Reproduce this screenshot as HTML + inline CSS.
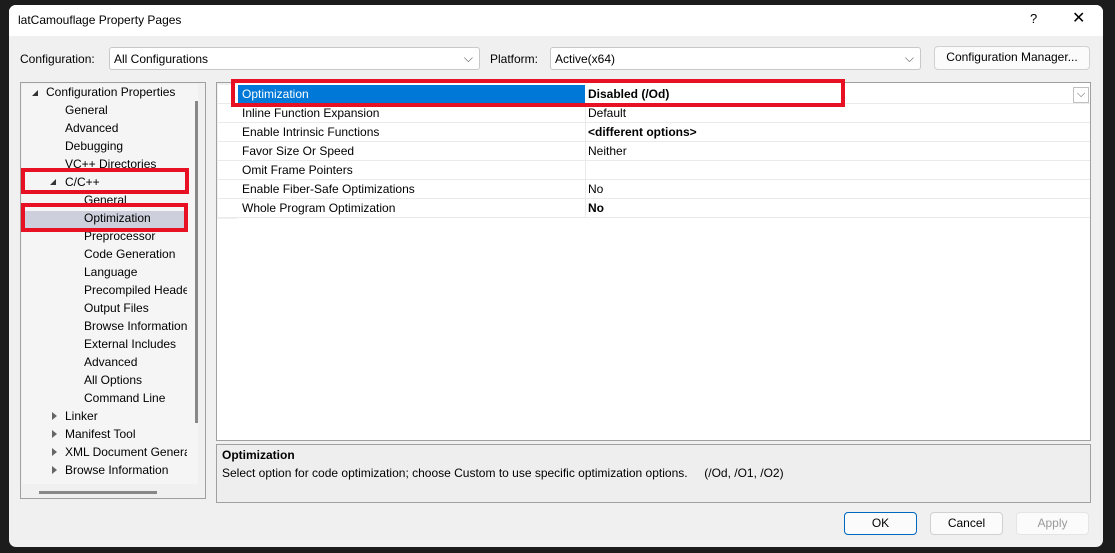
<!DOCTYPE html>
<html><head><meta charset="utf-8"><style>
*{box-sizing:border-box;margin:0;padding:0}
body{width:1115px;height:553px;background:#1c1c1c;position:relative;overflow:hidden;font-family:"Liberation Sans",sans-serif;font-size:12px;color:#000}
.a{position:absolute}
.win{left:9px;top:5px;width:1094px;height:542px;background:#f0f0f0;border-radius:7px;overflow:hidden}
.title{left:0;top:0;width:100%;height:31px;background:#fff}
.t{position:absolute;white-space:nowrap;line-height:14px}
.combo{background:#fff;border:1px solid #c8c8c8;border-radius:3px}
.btn{background:#fbfbfb;border:1px solid #d0d0d0;border-radius:4px;text-align:center;line-height:20px}
.red{border:4px solid #e81123}
.row{position:absolute;left:1px;width:872px;height:19px;border-bottom:1px solid #eaeaea;background:#fff}
.row .n{position:absolute;left:24px;top:2px}
.row .v{position:absolute;left:370px;top:2px}
.row .sep{position:absolute;left:367px;top:0;width:1px;height:19px;background:#eaeaea}
.tri{position:absolute;width:0;height:0}
.dn{border-left:6px solid transparent;border-bottom:6px solid #333}
.rt{border-top:4px solid transparent;border-bottom:4px solid transparent;border-left:5px solid #666}
</style></head><body>
<div class="a win">
<div class="a title"></div>
<div class="t" style="left:9px;top:8px;font-size:12px">latCamouflage Property Pages</div>
<div class="t" style="left:1021px;top:7px;font-size:13px">?</div>
<div class="t" style="left:1063px;top:7px;font-size:16px">✕</div>

<div class="t" style="left:11px;top:47px">Configuration:</div>
<div class="a combo" style="left:100px;top:42px;width:371px;height:23px"><div class="t" style="left:4px;top:4px">All Configurations</div><div class="t" style="right:6px;top:3px;color:#555">⌵</div></div>
<div class="t" style="left:481px;top:47px">Platform:</div>
<div class="a combo" style="left:541px;top:42px;width:371px;height:23px"><div class="t" style="left:4px;top:4px">Active(x64)</div><div class="t" style="right:6px;top:3px;color:#555">⌵</div></div>
<div class="a btn" style="left:925px;top:41px;width:156px;height:24px">Configuration Manager...</div>

<!-- tree -->
<div class="a" style="left:11px;top:77px;width:186px;height:417px;border:1px solid #a0a0a0;background:#f0f0f0">
<div class="a" style="left:1px;top:1px;width:176px;height:400px;background:#f5f5f5"></div>
<div class="a" style="left:174px;top:18px;width:3px;height:322px;background:#888"></div>
<div class="a" style="left:18px;top:408px;width:118px;height:3px;background:#888"></div>
<div class="a" style="left:4px;top:128px;width:159px;height:20px;background:#cdd0dc"></div>
</div>
<div class="tri dn" style="left:23px;top:85px"></div>
<div class="t" style="left:37px;top:80px">Configuration Properties</div>
<div class="t" style="left:56px;top:98px">General</div>
<div class="t" style="left:56px;top:116px">Advanced</div>
<div class="t" style="left:56px;top:134px">Debugging</div>
<div class="t" style="left:56px;top:152px">VC++ Directories</div>
<div class="tri dn" style="left:41px;top:174px"></div>
<div class="t" style="left:56px;top:170px">C/C++</div>
<div class="t" style="left:75px;top:188px">General</div>
<div class="t" style="left:75px;top:206px">Optimization</div>
<div class="t" style="left:75px;top:224px">Preprocessor</div>
<div class="t" style="left:75px;top:242px">Code Generation</div>
<div class="t" style="left:75px;top:260px">Language</div>
<div class="t" style="left:75px;top:278px;width:103px;overflow:hidden">Precompiled Headers</div>
<div class="t" style="left:75px;top:296px">Output Files</div>
<div class="t" style="left:75px;top:314px">Browse Information</div>
<div class="t" style="left:75px;top:332px">External Includes</div>
<div class="t" style="left:75px;top:350px">Advanced</div>
<div class="t" style="left:75px;top:368px">All Options</div>
<div class="t" style="left:75px;top:386px">Command Line</div>
<div class="tri rt" style="left:43px;top:407px"></div><div class="t" style="left:56px;top:404px">Linker</div>
<div class="tri rt" style="left:43px;top:425px"></div><div class="t" style="left:56px;top:422px">Manifest Tool</div>
<div class="tri rt" style="left:43px;top:443px"></div><div class="t" style="left:56px;top:440px;width:122px;overflow:hidden">XML Document Generator</div>
<div class="tri rt" style="left:43px;top:461px"></div><div class="t" style="left:56px;top:458px">Browse Information</div>

<!-- grid -->
<div class="a" style="left:207px;top:77px;width:875px;height:359px;border:1px solid #a0a0a0;background:#fff">
<div class="a" style="left:0;top:0;width:20px;height:136px;background:#f0f0f0"></div>
<div class="row" style="top:2px;background:#fff"><div class="a" style="left:20px;top:0;width:347px;height:18px;background:#0078d7"></div><div class="n" style="color:#fff">Optimization</div><div class="v" style="font-weight:bold">Disabled (/Od)</div></div>
<div class="row" style="top:21px"><div class="sep"></div><div class="n">Inline Function Expansion</div><div class="v">Default</div></div>
<div class="row" style="top:40px"><div class="sep"></div><div class="n">Enable Intrinsic Functions</div><div class="v" style="font-weight:bold">&lt;different options&gt;</div></div>
<div class="row" style="top:59px"><div class="sep"></div><div class="n">Favor Size Or Speed</div><div class="v">Neither</div></div>
<div class="row" style="top:78px"><div class="sep"></div><div class="n">Omit Frame Pointers</div><div class="v"></div></div>
<div class="row" style="top:97px"><div class="sep"></div><div class="n">Enable Fiber-Safe Optimizations</div><div class="v">No</div></div>
<div class="row" style="top:116px"><div class="sep"></div><div class="n">Whole Program Optimization</div><div class="v" style="font-weight:bold">No</div></div>
<div class="a" style="left:856px;top:4px;width:16px;height:16px;border:1px solid #c0c0c0;background:#fff;font-size:11px;text-align:center;line-height:13px;color:#555">⌵</div>
</div>

<!-- description -->
<div class="a" style="left:207px;top:439px;width:875px;height:59px;border:1px solid #a0a0a0;background:#eeeeee"></div>
<div class="t" style="left:213px;top:443px;font-weight:bold">Optimization</div>
<div class="t" style="left:213px;top:461px">Select option for code optimization; choose Custom to use specific optimization options.&nbsp;&nbsp;&nbsp;&nbsp;&nbsp;(/Od, /O1, /O2)</div>

<div class="a btn" style="left:835px;top:507px;width:73px;height:23px;border-color:#0067c0">OK</div>
<div class="a btn" style="left:921px;top:507px;width:73px;height:23px">Cancel</div>
<div class="a btn" style="left:1007px;top:507px;width:73px;height:23px;color:#9a9a9a;border-color:#e5e5e5">Apply</div>

<!-- red annotations -->
<div class="a red" style="left:222px;top:74px;width:614px;height:28px"></div>
<div class="a red" style="left:12px;top:163px;width:168px;height:26px"></div>
<div class="a red" style="left:12px;top:198px;width:167px;height:29px"></div>
</div>
</body></html>
